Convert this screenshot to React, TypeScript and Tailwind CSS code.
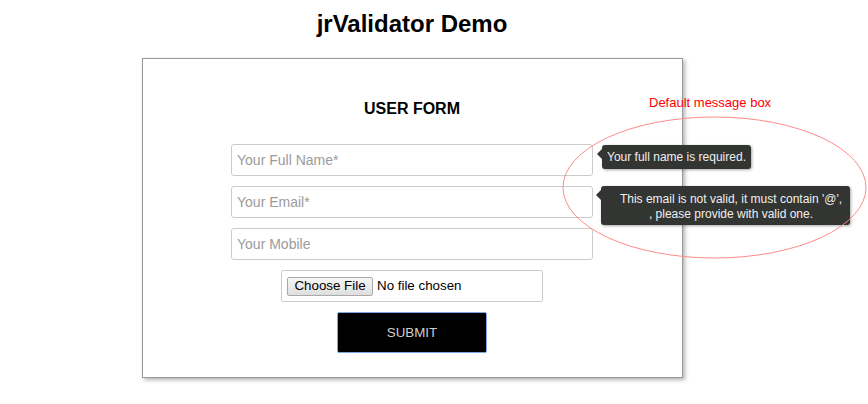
import React from "react";

function Tip({ children, className }: { children: React.ReactNode; className: string }) {
  return (
    <div
      className={
        "absolute bg-[#333532] text-[#f0f0f0] text-[12px] rounded-[3px] shadow-[1px_1px_3px_rgba(0,0,0,0.35)] " +
        className
      }
    >
      <div className="absolute left-[-5px] top-[4px] w-0 h-0 border-y-[5px] border-y-transparent border-r-[5px] border-r-[#333532]" />
      {children}
    </div>
  );
}

export default function App() {
  const font = { fontFamily: '"Liberation Sans", Arial, sans-serif' };
  return (
    <div className="relative w-[868px] h-[404px] bg-white overflow-hidden" style={font}>
      <div className="w-[824px] flex flex-col items-center">
        <h1 className="mt-[10px] text-[24px] leading-[28px] font-bold text-black">jrValidator Demo</h1>
        <div className="mt-[20px] w-[541px] h-[320px] border border-[#9a9a9a] shadow-[2px_2px_4px_rgba(0,0,0,0.3)] flex flex-col items-center pt-[40px]">
          <h2 className="text-[16px] leading-[20px] font-bold text-black">USER FORM</h2>
          <div className="mt-[25px] flex flex-col items-center gap-[10px]">
            <div className="w-[362px] h-[32px] border border-[#cccccc] rounded-[3px] flex items-center pl-[5px] text-[14px] text-[#9b9b9b]">
              Your Full Name*
            </div>
            <div className="w-[362px] h-[32px] border border-[#cccccc] rounded-[3px] flex items-center pl-[5px] text-[14px] text-[#9b9b9b]">
              Your Email*
            </div>
            <div className="w-[362px] h-[32px] border border-[#cccccc] rounded-[3px] flex items-center pl-[5px] text-[14px] text-[#9b9b9b]">
              Your Mobile
            </div>
            <div className="w-[262px] h-[32px] border border-[#cccccc] rounded-[2px] flex items-center pl-[5px] text-[13.33px] text-black">
              <div className="h-[19px] w-[86px] border border-[#a9a9a9] rounded-[2px] bg-gradient-to-b from-[#f6f6f6] to-[#dedede] flex items-center justify-center leading-none">
                Choose File
              </div>
              <span className="ml-[4px]">No file chosen</span>
            </div>
            <div className="w-[150px] h-[41px] bg-black border border-[#7ea4e4] rounded-[2px] flex items-center justify-center text-[13.33px] text-[#cfcfcf]">
              SUBMIT
            </div>
          </div>
        </div>
      </div>

      <Tip className="left-[602px] top-[145px] h-[24px] px-[5px] leading-[24px] whitespace-nowrap">
        Your full name is required.
      </Tip>
      <Tip className="left-[601px] top-[186px] w-[249px] h-[39px] pl-[16px] pr-[5px] pt-[6px] leading-[15px] text-center whitespace-nowrap">
        This email is not valid, it must contain '@',
        <br />, please provide with valid one.
      </Tip>

      <div className="absolute left-[649px] top-[95px] text-[13px] leading-[15px] text-[#ff0000]">Default message box</div>
      <svg className="absolute left-[562px] top-[116px] pointer-events-none" width="306" height="144" viewBox="0 0 306 144">
        <ellipse cx="152.5" cy="71.5" rx="151.5" ry="70.5" fill="none" stroke="#ff8a8a" strokeWidth="1" />
      </svg>
    </div>
  );
}
